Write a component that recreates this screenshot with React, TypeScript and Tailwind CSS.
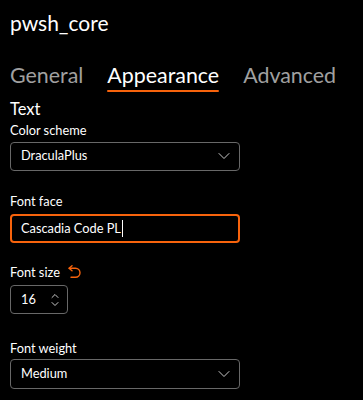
import React from "react";

function Chevron() {
  return (
    <svg width="12" height="8" viewBox="0 0 12 8" fill="none" stroke="#c8c8c8" strokeWidth="1" strokeLinecap="round" strokeLinejoin="round">
      <path d="M1 1.5 6 6.5 11 1.5" />
    </svg>
  );
}

function Spinner() {
  return (
    <svg width="8" height="14" viewBox="0 0 8 14" fill="none" stroke="#c8c8c8" strokeWidth="1" strokeLinecap="round" strokeLinejoin="round">
      <path d="M1 4.5 4 1.5 7 4.5" />
      <path d="M1 9.5 4 12.5 7 9.5" />
    </svg>
  );
}

function ResetIcon() {
  return (
    <svg width="13" height="15" viewBox="0 0 13 15" fill="none" stroke="#f7630c" strokeWidth="1.4" strokeLinecap="round" strokeLinejoin="round">
      <path d="M4 0.8 1 3.3 4 5.8" />
      <path d="M1.3 3.3H7.5a4.5 4.5 0 0 1 0 9H3" />
    </svg>
  );
}

export default function App() {
  return (
    <div className="w-[363px] h-[400px] bg-black text-white overflow-hidden px-[10px] font-[Lato,sans-serif]">
      <div className="text-[21px] leading-[28px] pt-[9px]">pwsh_core</div>
      <div className="flex gap-[24px] mt-[23px] text-[21.4px] leading-[30px]">
        <div className="text-[#a0a0a0]">General</div>
        <div className="flex flex-col">
          <span>Appearance</span>
          <div className="h-[2px] bg-[#f7630c] rounded-full" />
        </div>
        <div className="text-[#a0a0a0]">Advanced</div>
      </div>
      <div className="text-[16.5px] leading-[20px] mt-[7px]">Text</div>
      <div className="text-[12.8px] leading-[18px] mt-[2px]">Color scheme</div>
      <div className="mt-[3px] w-[230px] h-[29px] border border-[#686868] rounded-[4px] flex items-center justify-between pl-[10px] pr-[9px] pb-[1px] text-[12.8px]">
        <span>DraculaPlus</span>
        <Chevron />
      </div>
      <div className="text-[12.8px] leading-[18px] mt-[21px]">Font face</div>
      <div className="mt-[4px] w-[230px] h-[29px] border-2 border-[#f7630c] rounded-[4px] flex items-center pl-[9px] text-[12.8px]">
        <span>Cascadia Code PL</span>
        <span className="inline-block w-[1px] h-[17px] bg-white ml-[1px]" />
      </div>
      <div className="flex items-center gap-[8px] text-[12.8px] leading-[18px] mt-[20px]">
        <span>Font size</span>
        <ResetIcon />
      </div>
      <div className="mt-[4px] w-[58px] h-[29px] border border-[#686868] rounded-[4px] flex items-center justify-between pl-[10px] pr-[8px] text-[12.8px]">
        <span>16</span>
        <Spinner />
      </div>
      <div className="text-[12.8px] leading-[18px] mt-[25px]">Font weight</div>
      <div className="mt-[2px] w-[230px] h-[30px] border border-[#686868] rounded-[4px] flex items-center justify-between pl-[10px] pr-[9px] text-[12.8px]">
        <span>Medium</span>
        <Chevron />
      </div>
    </div>
  );
}
